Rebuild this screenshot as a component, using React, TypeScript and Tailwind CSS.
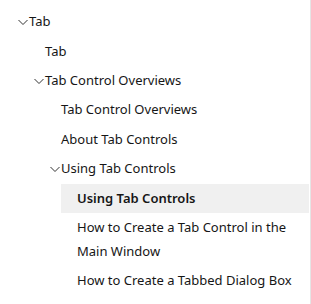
import React from "react";

type Row = {
  label: string;
  level: 1 | 2 | 3 | 4;
  chevron?: "down" | "right";
  selected?: boolean;
};

const ROWS: Row[] = [
  { label: "SysLink", level: 1, chevron: "right" },
  { label: "Tab", level: 1, chevron: "down" },
  { label: "Tab", level: 2 },
  { label: "Tab Control Overviews", level: 2, chevron: "down" },
  { label: "Tab Control Overviews", level: 3 },
  { label: "About Tab Controls", level: 3 },
  { label: "Using Tab Controls", level: 3, chevron: "down" },
  { label: "Using Tab Controls", level: 4, selected: true },
  { label: "How to Create a Tab Control in the Main Window", level: 4 },
  { label: "How to Create a Tabbed Dialog Box", level: 4 },
  { label: "Tab Control Reference", level: 2, chevron: "right" },
];

const INDENT: Record<number, string> = {
  1: "ml-[13px]",
  2: "ml-[29px]",
  3: "ml-[45px]",
  4: "ml-[61px]",
};

function Chevron({ dir }: { dir: "down" | "right" }) {
  return (
    <span className="absolute left-[5px] top-[10px] w-[10px] h-[10px]">
      <svg width="10" height="10" viewBox="0 0 10 10" fill="none" stroke="#333" strokeWidth="1" aria-hidden="true">
        {dir === "down" ? <path d="M0.5 3 L5 7.5 L9.5 3" /> : <path d="M3 0.5 L7.5 5 L3 9.5" />}
      </svg>
    </span>
  );
}

export default function App() {
  return (
    <div
      className="w-[311px] h-[304px] overflow-hidden bg-white border-r border-[#e5e5e5] text-[13px] text-[#161616]"
      style={{ fontFamily: '"Segoe UI", "Noto Sans", sans-serif' }}
    >
      <ul className="mt-[-22px] pr-[1px]">
        {ROWS.map((r, i) => (
          <li
            key={i}
            className={`relative ${INDENT[r.level]} pl-[16px] pr-[8px] py-[2.8px] leading-[23.8px] ${
              r.selected ? "bg-[#f0f0f0] font-semibold" : ""
            }`}
          >
            {r.chevron && <Chevron dir={r.chevron} />}
            {r.label}
          </li>
        ))}
      </ul>
    </div>
  );
}
